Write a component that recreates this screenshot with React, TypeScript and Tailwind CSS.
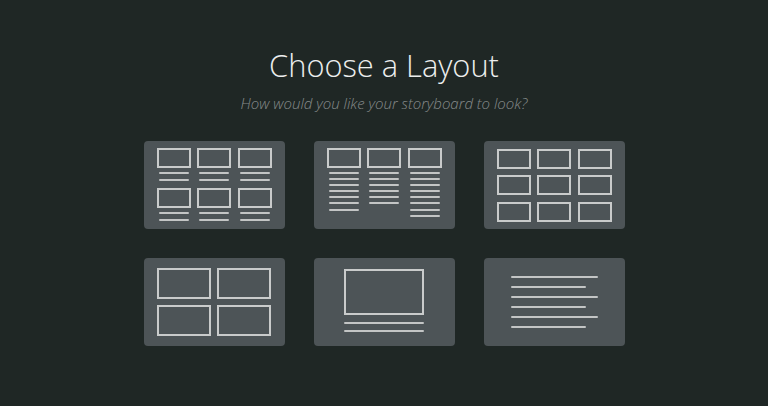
import React from "react";

const Box = ({ w, h }: { w: string; h: string }) => (
  <div className={`${w} ${h} border-2 border-[#c9cbcb] shrink-0`} />
);

const Line = ({ w }: { w: string }) => <div className={`${w} h-[2px] bg-[#c3c5c5] rounded-full`} />;

function Card({ children, className }: { children: React.ReactNode; className?: string }) {
  return (
    <button
      type="button"
      className={`w-[141px] h-[88px] rounded-[4px] bg-[#4d5457] hover:bg-[#5a6164] flex justify-center ${className ?? ""}`}
    >
      {children}
    </button>
  );
}

// 3 x 2 frames with captions
function GridWithCaptions() {
  return (
    <div className="grid grid-cols-3 gap-x-[6.5px] gap-y-[7px]">
      {Array.from({ length: 6 }).map((_, i) => (
        <div key={i} className="flex flex-col items-center">
          <Box w="w-[34px]" h="h-[20px]" />
          <div className="mt-[4px] flex flex-col gap-[5px]">
            <Line w="w-[30px]" />
            <Line w="w-[30px]" />
          </div>
        </div>
      ))}
    </div>
  );
}

// 3 columns, long text under each
function ColumnsWithText() {
  const counts = [7, 6, 8];
  return (
    <div className="flex gap-[6.5px]">
      {counts.map((n, i) => (
        <div key={i} className="flex flex-col items-center">
          <Box w="w-[34px]" h="h-[20px]" />
          <div className="mt-[4px] flex flex-col gap-[4.1px]">
            {Array.from({ length: n }).map((_, j) => (
              <Line key={j} w="w-[30px]" />
            ))}
          </div>
        </div>
      ))}
    </div>
  );
}

function NineGrid() {
  return (
    <div className="grid grid-cols-3 gap-x-[6.5px] gap-y-[6.7px]">
      {Array.from({ length: 9 }).map((_, i) => (
        <Box key={i} w="w-[34px]" h="h-[20px]" />
      ))}
    </div>
  );
}

function FourGrid() {
  return (
    <div className="grid grid-cols-2 gap-[6.7px]">
      {Array.from({ length: 4 }).map((_, i) => (
        <Box key={i} w="w-[54px]" h="h-[31px]" />
      ))}
    </div>
  );
}

function SingleFrame() {
  return (
    <div className="flex flex-col">
      <Box w="w-[80px]" h="h-[46px]" />
      <div className="mt-[7px] flex flex-col gap-[6px]">
        <Line w="w-[80px]" />
        <Line w="w-[80px]" />
      </div>
    </div>
  );
}

function TextOnly() {
  const widths = ["w-[87px]", "w-[75px]", "w-[87px]", "w-[75px]", "w-[87px]", "w-[75px]"];
  return (
    <div className="flex flex-col gap-[8px] w-[87px]">
      {widths.map((w, i) => (
        <Line key={i} w={w} />
      ))}
    </div>
  );
}

export default function App() {
  return (
    <div
      className="w-full h-[406px] bg-[#1f2725] flex flex-col items-center overflow-hidden"
      style={{ fontFamily: '"Open Sans", "Noto Sans", sans-serif' }}
    >
      <h1 className="mt-[47px] text-[30.8px] leading-[36px] font-light text-[#eceeee]">Choose a Layout</h1>
      <p className="mt-[9.5px] text-[15px] leading-[20px] italic font-light text-[#878c8c]">
        How would you like your storyboard to look?
      </p>

      <div className="mt-[28.5px] grid grid-cols-3 gap-x-[29px] gap-y-[29px]">
        <Card className="items-start pt-[7px]">
          <GridWithCaptions />
        </Card>
        <Card className="items-start pt-[7px]">
          <ColumnsWithText />
        </Card>
        <Card className="items-start pt-[7.5px]">
          <NineGrid />
        </Card>
        <Card className="items-center">
          <FourGrid />
        </Card>
        <Card className="items-start pt-[11px]">
          <SingleFrame />
        </Card>
        <Card className="items-center">
          <TextOnly />
        </Card>
      </div>
    </div>
  );
}
